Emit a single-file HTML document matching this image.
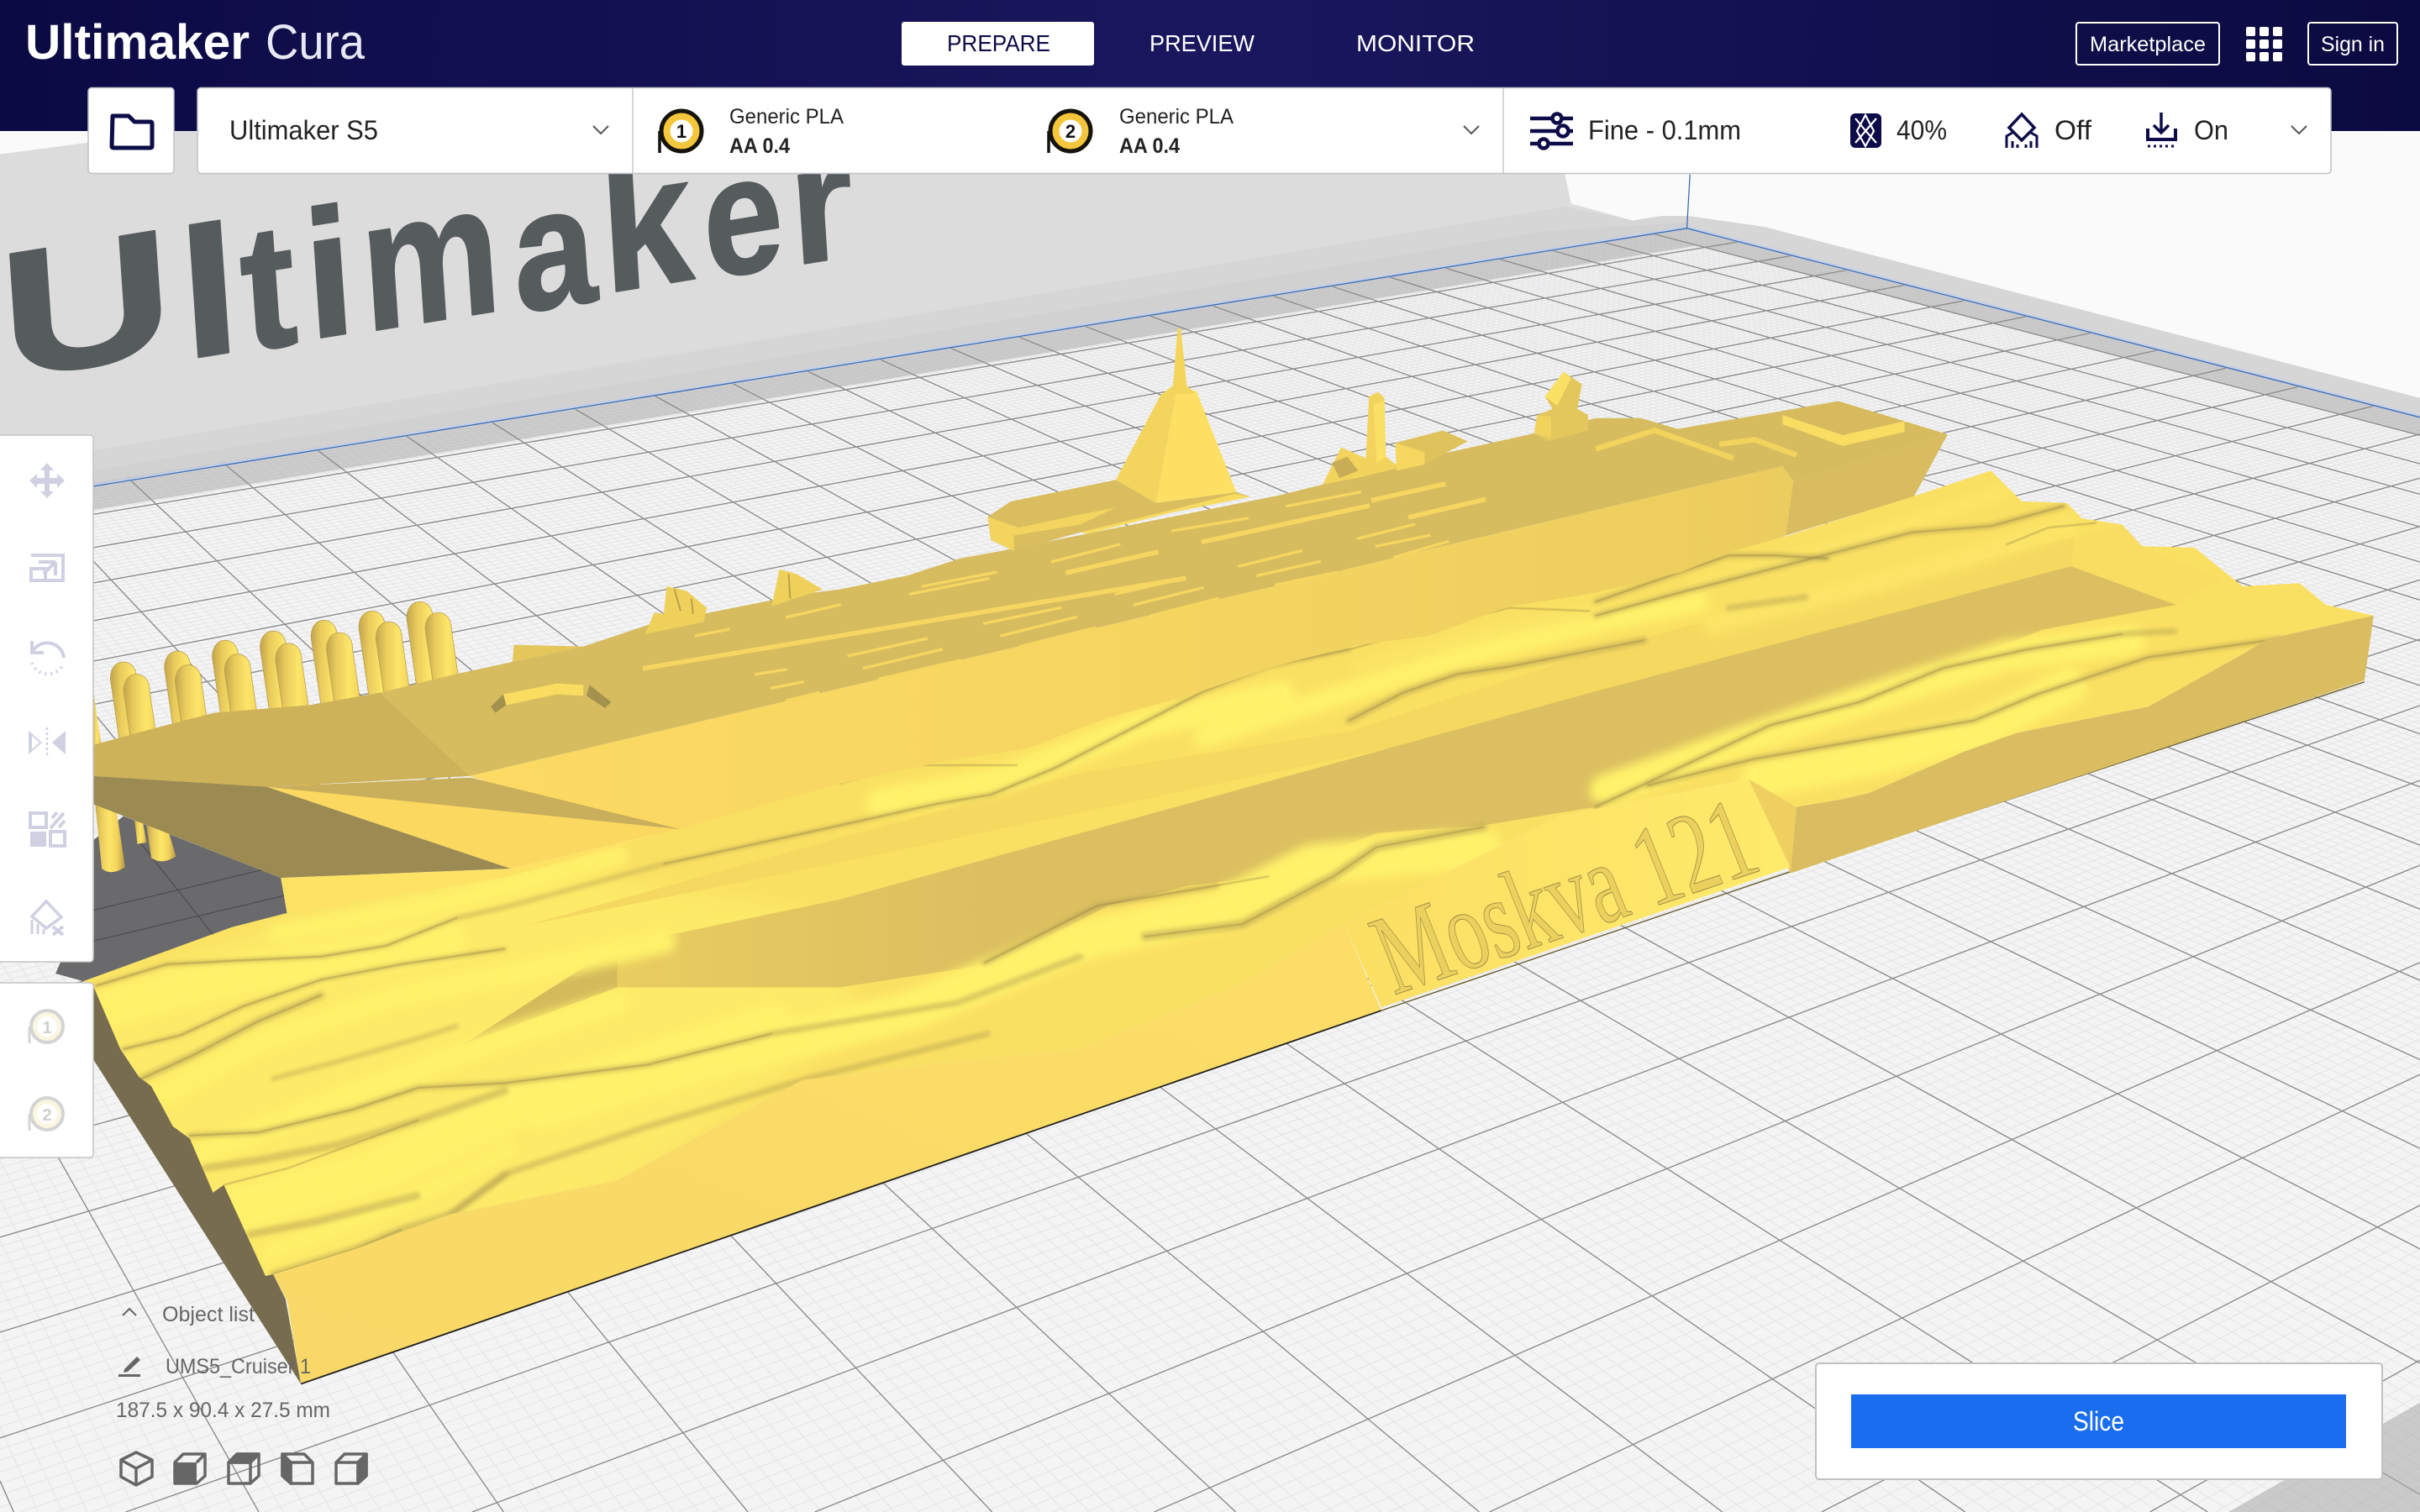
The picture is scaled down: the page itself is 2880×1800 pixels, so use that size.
<!DOCTYPE html>
<html lang="en"><head><meta charset="utf-8"><title>Ultimaker Cura</title>
<style>
html,body{margin:0;padding:0;width:2880px;height:1800px;overflow:hidden;background:#fafafa}
svg{display:block}
text{font-family:"Liberation Sans",Arial,sans-serif}
</style></head><body>
<svg xmlns="http://www.w3.org/2000/svg" width="2880" height="1800" viewBox="0 0 2880 1800">
<defs>
<linearGradient id="hdr" x1="0" x2="1" y1="0" y2="0"><stop offset="0" stop-color="#0c0a44"/><stop offset=".5" stop-color="#1a175e"/><stop offset="1" stop-color="#0b0a40"/></linearGradient>
<linearGradient id="pin" x1="0" x2="1" y1="0" y2="0"><stop offset="0" stop-color="#c2a44e"/><stop offset=".22" stop-color="#e9cb5c"/><stop offset=".5" stop-color="#fde669"/><stop offset=".75" stop-color="#f2d25b"/><stop offset="1" stop-color="#b5994a"/></linearGradient>
<linearGradient id="hull" x1="0" x2="1" y1="0" y2="0"><stop offset="0" stop-color="#fcda63"/><stop offset=".6" stop-color="#f4d460"/><stop offset="1" stop-color="#ebcc5e"/></linearGradient>
<linearGradient id="plq" x1="0" x2="1" y1="0" y2="0"><stop offset="0" stop-color="#fbdf64"/><stop offset="1" stop-color="#feea6b"/></linearGradient>
<linearGradient id="front" x1="0" x2="1" y1="1" y2="0"><stop offset="0" stop-color="#f9d867"/><stop offset="1" stop-color="#fcde67"/></linearGradient>
<linearGradient id="flat" gradientUnits="userSpaceOnUse" x1="400" y1="0" x2="640" y2="0"><stop offset="0" stop-color="#e9cc60"/><stop offset="1" stop-color="#dcbf60"/></linearGradient>
<filter id="b5" x="-10%" y="-50%" width="120%" height="200%"><feGaussianBlur stdDeviation="7"/></filter>
<filter id="b3" x="-10%" y="-50%" width="120%" height="200%"><feGaussianBlur stdDeviation="3"/></filter>
<filter id="b1" x="-10%" y="-50%" width="120%" height="200%"><feGaussianBlur stdDeviation="1.3"/></filter>
<filter id="b0" x="-10%" y="-50%" width="120%" height="200%"><feGaussianBlur stdDeviation=".4"/></filter>
<clipPath id="wclip"><path d="M54 636L150 601L185 592L330 568L430 540L544 508L614 493L666 485L718 465L770 451L822 433L874 419L926 412L978 393L1030 385L1089 371L1120 358L1159 347L1242 321L1290 305L1310 325L1339 326L1349 336L1375 340L1388 354L1422 355L1453 380L1490 378L1507 392L1538 399L1470 414L1453 424L1392 458L1307 475L1273 487L1211 514L1194 518L1164 523L1133 505L1010 529L871 599L800 640L700 680L600 690L520 700L400 765L292 787L229 810L177 826L172 827L145 768L138 773L123 738L112 730L98 704L90 698L78 680L60 638Z"/></clipPath>
<g id="p"><path d="M-8.500 11C-8.500 3-4 0 0 0C4 0 8.500 3 8.500 11L21 96L4 96Z" fill="url(#pin)" stroke="#b89c4a" stroke-width=".4"/></g>
</defs>

<g transform="scale(1.83673)">
<rect width="1568" height="980" fill="#fafafa"/>
<path d="M0 100L113 85L1014 85L1014 113L1018 132L1058 143L1076 140L1094 140L1143 147L1568 258L1568 275L1093 150L0 327Z" fill="#dcdcdc"/>
<path d="M0 302L1014 134L1058 143L1076 140L1094 140L1094 150L0 327Z" fill="#d6d6d6"/>
<path d="M0 315L1000 150L1094 144L1094 150L0 327Z" fill="#d1d1d1"/>
<path d="M1030 158L1062 151L1060 155L1035 161Z" fill="#ececec"/>
<path d="M1094 140L1143 147L1568 258L1568 275L1093 150Z" fill="#d6d6d6"/>
<path d="M0 325L1093 148L1568 270L1568 980L0 980Z" fill="#f4f4f5"/>
<g id="grid"></g>
<path d="M1568 909L1444 980L1568 980Z" fill="#a8a8a8" fill-opacity=".55"/>
<path d="M0 324.500L1093 147.500L1568 270" fill="none" stroke="#c3d0e6" stroke-width="2.200"/>
<path d="M0 325L1093 148L1568 270.500" fill="none" stroke="#3f6cb0" stroke-width=".7"/>
<path d="M1093 148L1095 113" fill="none" stroke="#3f6cb0" stroke-width=".7"/>
<g fill="#565b5d" stroke="#565b5d" stroke-width="1" stroke-linejoin="round" font-weight="700" font-size="100">
<text transform="matrix(1.55 -.25 .08 1.16 3 246)">U</text>
<text transform="matrix(1.4 -.22 .08 1.18 119 233)">l</text>
<text transform="matrix(1.05 -.17 .08 1.14 159 228)">t</text>
<text transform="matrix(1.15 -.18 .08 1.17 200 220)">i</text>
<text transform="matrix(1 -.16 .08 1.2 237 215)">m</text>
<text transform="matrix(.95 -.15 .08 1.1 335 203)">a</text>
<text transform="matrix(1.05 -.17 .07 1.18 392 190)">k</text>
<text transform="matrix(.92 -.15 .07 1.08 458 181)">e</text>
<text transform="matrix(1.05 -.17 .07 1.08 514 172)">r</text>
</g>
<path d="M60 545L80 529L182 569L186 592L54 636L36 631L39 624L60 610Z" fill="#6a6a6c"/>
<path d="M60 590L186 560M90 545L165 640M60 610L186 580" stroke="#4a4a4c" stroke-width=".6" fill="none"/>
<g>
<use href="#p" x="80" y="429"/><use href="#p" x="115" y="422"/><use href="#p" x="146" y="415"/><use href="#p" x="177" y="409"/><use href="#p" x="210" y="402"/><use href="#p" x="241" y="396"/><use href="#p" x="272" y="390"/>
<use href="#p" x="88.500" y="437"/><use href="#p" x="122" y="431"/><use href="#p" x="154" y="424"/><use href="#p" x="187" y="417"/><use href="#p" x="220" y="410"/><use href="#p" x="252" y="403"/><use href="#p" x="284" y="397"/>
<path d="M60 445L66 485L60 490Z" fill="url(#pin)"/>
<path d="M61 515L74 515L81 562Q72 568 66 563Z" fill="url(#pin)"/>
<path d="M87 530L92 530L95 546L89 547Z" fill="url(#pin)"/>
<path d="M95 535L108 535L114 555Q105 561 98 556Z" fill="url(#pin)"/>
</g>
<path d="M304 503L1155 302L1162 312L1157 347L1000 430L700 530L441 545Z" fill="url(#hull)"/>
<path d="M1162 312L1262 281.500L1240 322L1157 347Z" fill="#d8bc5f"/>
<path d="M60 483L104 471L139 462L201 457L246 449L295 437L378 419L420 405L520 385L544 382L588 373L622 362L649 357L829 321L857 314L907 303L926 296L989 282L1030 272L1034 271L1063 271L1087 278L1191 260L1262 281.500L1162 312L1155 302L304 503L60 503Z" fill="#d7bc5f"/>
<path d="M60 483L104 471L139 462L201 457L246 449L304 503L173 510L60 503Z" fill="#cdb25a"/>
<path d="M60 503L173 510L331 563L182 569L60 521Z" fill="#9b8a52"/>
<path d="M173 510L305 504L441 537L331 563Z" fill="#fbd860"/>
<path d="M173 510L305 504L441 537.500Z" fill="#c9ae5b"/>
<path d="M182 569L331 563L441 537L500 560L300 590L186 592Z" fill="#fde264"/>
<path d="M326 450L361 443L378 444L378 451L361 450L328 457Z" fill="#f9dc60"/>
<path d="M318 458L326 450L328 457L321 462ZM382 444L396 455L392 459L380 451Z" fill="#a3914e"/>
<path d="M333 418L378 419L332 429Z" fill="#e4c65a"/>
<path d="M432 380L445 383L458 394L456 403L418 411L424 397L430 398Z" fill="#eed05a"/>
<path d="M505 369L516 372L533 382L500 393Z" fill="#eed05a"/>
<path d="M437 382L441 396M448 388L449 398M511 372L512 388" stroke="#b79c4c" stroke-width="1"/>
<g stroke="#f6d660" fill="none" stroke-width="1.800" stroke-linecap="square">
<path d="M682 364L725 353M598 380L645 371M723 385L767 375M735 392L779 381M746 399L789 388M638 404L687 394M649 412L697 400M661 419L709 407M550 425L600 414M560 433L610 421M570 440L622 428M760 344L808 336M834 328L881 319M880 349L916 340M892 354L926 347M904 361L938 351M803 367L843 357M815 373L855 364M827 379L866 371M451 412L472 408M490 437L509 434M500 446L520 442M510 454L530 449M510 400L544 392M590 385L640 375"/>
<path d="M418 433L767 375M692 371L749 358M780 351L886 328M890 324L935 314M914 335L961 324" stroke-width="3"/>
<path d="M1034 291L1072 279L1123 297M1114 288L1137 285L1164 295" stroke="#f2d35e" stroke-width="3.500" stroke-linecap="butt"/>
</g>
<path d="M640 335L655 325L723 311L749 326L801 319L810 322L760 332L700 345L657 357L642 350Z" fill="#dabd5e"/>
<path d="M640 335L660 342L702 333L723 329L700 340L657 347L657 357L642 350Z" fill="#f3d45e"/>
<path d="M700 345L749 333L800 320L810 322L760 332L705 346Z" fill="#f7da60"/>
<path d="M752 256L762 255L749 326L723 311Z" fill="#f3d45c"/>
<path d="M762 255L775 253L801 319L749 326Z" fill="#fcdf63"/>
<path d="M763 213L765 213L769 250L775 255L752 256L760 250Z" fill="#f4d55c"/>
<path d="M857 314L869 290L885 297L887 257L893 254L897 258L898 296L907 303L883 309Z" fill="#f2d35c"/>
<path d="M890 262L897 260L898 296L892 300Z" fill="#fbe066"/>
<path d="M863 300L873 296L880 305L868 310Z" fill="#c8ad56"/>
<path d="M904 287L935 279L951 286L923 301L905 305Z" fill="#dfc25c"/>
<path d="M904 287L923 293L923 301L905 305Z" fill="#f5d760"/>
<path d="M994 281L996 269L1006 265L1001 257L1013 241L1025 249L1022 265L1029 269L1029 279L1003 286Z" fill="#e3c65c"/>
<path d="M1001 257L1013 241L1018 245L1009 263Z" fill="#fbe066"/>
<path d="M996 269L1005 270L1005 284L994 281Z" fill="#f0d25c"/>
<path d="M1155 269L1191 260L1234 273L1194 282Z" fill="#d6ba5d"/>
<path d="M1155 269L1194 282L1234 273L1234 280L1194 289L1155 275Z" fill="#f9dc62"/>

<path d="M54 636L150 601L185 592L330 568L430 540L544 508L614 493L666 485L718 465L770 451L822 433L874 419L926 412L978 393L1030 385L1089 371L1120 358L1159 347L1242 321L1290 305L1310 325L1339 326L1349 336L1375 340L1388 354L1422 355L1453 380L1490 378L1507 392L1538 399L1470 414L1453 424L1392 458L1307 475L1273 487L1211 514L1194 518L1164 523L1133 505L1010 529L871 599L800 640L700 680L600 690L520 700L400 765L292 787L229 810L177 826L172 827L145 768L138 773L123 738L112 730L98 704L90 698L78 680L60 638Z" fill="#fae062"/>

<g clip-path="url(#wclip)">
<path d="M40 640L330 560L520 590L560 660L400 770L170 835Z" fill="#fdea68" filter="url(#b5)"/>
<path d="M340 600L544 559L1089 446L1342 367L1344 348L1238 374L1089 407L1013 429L874 474L700 501L544 543Z" fill="#f5d860"/>
<path d="M1344 348L1342 367L1410 392L1440 375L1388 354L1375 340Z" fill="#f9dd62"/>
<path d="M544 583L1034 448L1342 367L1410 392L1324 408L1238 441L1136 475L1034 523L961 535L892 540L822 568L770 574L718 587L648 624L544 640L400 640L300 677L400 613Z" fill="url(#flat)"/>
<path d="M400 613L400 640L300 677Z" fill="#d5ba5c"/>
<g fill="none" stroke="#fff16b" filter="url(#b3)" stroke-linecap="round">
<path d="M66 655L120 640L200 625L290 610" stroke-width="26"/>
<path d="M180 605L290 585L400 555" stroke-width="13"/>
<path d="M100 712L170 675L260 645L340 630L430 610" stroke-width="16"/>
<path d="M130 748L220 712L330 672L400 650" stroke-width="16"/>
<path d="M150 785L240 760L340 715L500 665" stroke-width="30"/>
<path d="M175 812L260 780L330 745" stroke-width="10"/>
<path d="M350 720L450 690L590 655L700 610L790 590L850 560L960 550" stroke-width="26"/>
<path d="M570 520L650 505L740 470L830 450" stroke-width="18"/>
<path d="M780 478L870 450L950 425L1030 405L1100 390" stroke-width="14"/>
<path d="M880 432L960 410L1040 395" stroke-width="8" stroke="#fbe466"/>
<path d="M1040 512L1130 480L1220 450L1300 425L1380 415" stroke-width="20"/>
<path d="M1140 505L1220 490L1280 475L1340 445" stroke-width="24"/>
<path d="M1100 378L1180 358L1250 335L1300 318" stroke-width="10" stroke="#fbe466"/>
<path d="M1110 405L1190 385L1280 360L1340 340" stroke-width="14" stroke="#fbe466"/>
</g>
<g fill="none" stroke="#b9a353" filter="url(#b1)" stroke-linecap="round" stroke-opacity=".5" stroke-linejoin="round">
<path d="M62 639L108 625L146 623L208 620L250 613L296 595L327 588L430 560L544 535L607 521L642 515L683 498L753 462L780 448L822 432L874 421" stroke-width="3"/>
<path d="M80 680L117 671L158 652L208 635L260 625L327 615" stroke-width="3"/>
<path d="M92 699L125 684L167 662L208 645" stroke-width="5"/>
<path d="M177 699L219 688L271 673L296 665" stroke-width="3"/>
<path d="M123 736L167 734L229 719L271 705L327 702L420 690L500 670L620 650L700 620" stroke-width="4"/>
<path d="M133 757L167 752L219 742L271 726L327 707" stroke-width="5"/>
<path d="M162 800L208 791L270 775" stroke-width="5"/>
<path d="M177 826L229 810L260 797L292 787L327 761" stroke-width="5"/>
<path d="M292 787L330 760L420 730L520 700L640 670" stroke-width="4"/>
<path d="M742 607L805 599L864 568L892 549L961 536" stroke-width="6"/>
<path d="M638 624L711 587L788 574" stroke-width="4"/>
<path d="M874 467L909 449L944 437L978 432L1065 415" stroke-width="5"/>
<path d="M1034 390L1068 378L1120 360L1150 360L1184 362" stroke-width="4"/>
<path d="M1034 399L1085 385L1170 363L1239 345L1290 341L1337 328" stroke-width="4"/>
<path d="M1034 523L1085 499L1147 470L1205 455L1259 433L1313 421L1375 411L1409 409" stroke-width="4"/>
<path d="M1068 509L1136 492L1205 480L1279 467L1320 450L1392 426L1477 414" stroke-width="4"/>
<path d="M1120 394L1170 387" stroke-width="4"/>
</g>
<g fill="none" stroke="#8a7841" filter="url(#b0)" stroke-linecap="round" stroke-linejoin="round" stroke-opacity=".55" stroke-width=".8">
<path d="M62 639L108 625L146 623L208 620L250 613L296 595"/>
<path d="M80 680L117 671L158 652L208 635L260 625L327 615"/>
<path d="M92 699L125 684L167 662L208 645"/>
<path d="M123 736L167 734L229 719L271 705L327 702L420 690L500 670"/>
<path d="M145 768L187 757L271 726"/>
<path d="M177 826L229 810L260 797"/>
<path d="M544 508L590 496L659 496"/>
<path d="M544 535L607 521L642 515L683 498L753 462L780 448L822 432L874 421L926 407L978 394L1030 396"/>
<path d="M874 467L909 449L944 437L978 432L1065 415"/>
<path d="M1034 399L1085 385L1170 363L1239 345L1290 341L1337 328"/>
<path d="M1034 390L1068 378L1120 360L1150 360L1184 362"/>
<path d="M1034 523L1085 499L1147 470L1205 455L1259 433L1313 421L1375 411"/>
<path d="M1068 509L1136 492L1205 480L1279 467L1320 450L1392 426L1477 414"/>
<path d="M638 624L711 587L788 574L822 568"/>
<path d="M742 607L805 599L864 568L892 549L961 536"/>
<path d="M430 560L544 535"/>
<path d="M1300 353L1327 342L1358 339"/>
</g>
</g>

<path d="M177 826L229 810L292 787L400 765L520 700L600 690L700 680L800 640L871 599L895 655L195 897L186 843Z" fill="url(#front)"/>
<path d="M195 897L895 655" stroke="#222" stroke-width="1" fill="none"/>
<path d="M895 655L1160 565L1532 442" stroke="#6d6238" stroke-width=".8" fill="none"/>
<path d="M1164 523L1194 518L1211 514L1273 487L1307 475L1392 458L1453 424L1470 414L1538 399L1532 441L1160 566Z" fill="#d9bd60"/>
<path d="M1133 505L1164 523L1160 566Z" fill="#eecf60"/>
<path d="M871 599L1010 529L1133 505L1160 562L895 653Z" fill="url(#plq)"/>
<text transform="matrix(1 -.34 .56 1.4 903 645)" font-size="50" textLength="240" lengthAdjust="spacingAndGlyphs" fill="#ecd05e" stroke="#9c8947" stroke-width=".35" style="font-family:'Liberation Serif',serif">Moskva 121</text>
<path d="M60 638L78 680L90 698L98 704L112 730L123 738L138 773L145 768L172 827L177 826L185 842L195 897L60 686Z" fill="#776c4f"/>
</g>

<rect width="2880" height="156" fill="url(#hdr)"/>
<text x="30" y="70" font-size="58" font-weight="700" fill="#fff" textLength="267" lengthAdjust="spacingAndGlyphs">Ultimaker</text>
<text x="316" y="70" font-size="58" fill="#e8e8f4" textLength="118" lengthAdjust="spacingAndGlyphs">Cura</text>
<rect x="1073" y="26" width="229" height="52" rx="3" fill="#fff"/>
<text x="1127" y="61" font-size="28" fill="#0d0c45" textLength="123" lengthAdjust="spacingAndGlyphs">PREPARE</text>
<text x="1368" y="61" font-size="28" fill="#fff" textLength="125" lengthAdjust="spacingAndGlyphs">PREVIEW</text>
<text x="1614" y="61" font-size="28" fill="#fff" textLength="141" lengthAdjust="spacingAndGlyphs">MONITOR</text>
<rect x="2471" y="27" width="170" height="50" rx="3" fill="none" stroke="#fff" stroke-width="2"/>
<text x="2487" y="61" font-size="25" fill="#fff" textLength="138" lengthAdjust="spacingAndGlyphs">Marketplace</text>
<rect x="2747" y="27" width="106" height="50" rx="3" fill="none" stroke="#fff" stroke-width="2"/>
<text x="2762" y="61" font-size="25" fill="#fff" textLength="76" lengthAdjust="spacingAndGlyphs">Sign in</text>
<g fill="#fff">
<rect x="2673" y="32" width="11" height="11" rx="2"/><rect x="2689" y="32" width="11" height="11" rx="2"/><rect x="2705" y="32" width="11" height="11" rx="2"/>
<rect x="2673" y="47" width="11" height="11" rx="2"/><rect x="2689" y="47" width="11" height="11" rx="2"/><rect x="2705" y="47" width="11" height="11" rx="2"/>
<rect x="2673" y="62" width="11" height="11" rx="2"/><rect x="2689" y="62" width="11" height="11" rx="2"/><rect x="2705" y="62" width="11" height="11" rx="2"/>
</g>

<g fill="#fff" stroke="#c0c0c8" stroke-width="1.500">
<rect x="105" y="104.500" width="102" height="102" rx="4"/>
<rect x="235" y="104.500" width="2539" height="102" rx="4"/>
</g>
<path d="M134 138h19l7 7h19q2 0 2 2v27q0 2-2 2h-44q-2 0-2-2z" fill="none" stroke="#0e0c48" stroke-width="5" stroke-linejoin="round"/>
<path d="M753 105v101M1789 105v101" stroke="#c8c8c8" stroke-width="1.500"/>
<text x="273" y="166" font-size="32" fill="#232323" textLength="177" lengthAdjust="spacingAndGlyphs">Ultimaker S5</text>
<g fill="none" stroke="#555" stroke-width="2"><path d="M706 150l9 9 9-9M1742 150l9 9 9-9M2727 150l9 9 9-9"/></g>

<g transform="translate(811,156)">
<path d="M-26 26V0" stroke="#111" stroke-width="3.500" fill="none"/>
<circle r="24" fill="#f3c63c" stroke="#15130c" stroke-width="5"/><circle r="13.500" fill="#fff"/>
<text y="8" text-anchor="middle" font-size="22" font-weight="700" fill="#111">1</text></g>
<g transform="translate(1274,156)">
<path d="M-26 26V0" stroke="#111" stroke-width="3.500" fill="none"/>
<circle r="24" fill="#f3c63c" stroke="#15130c" stroke-width="5"/><circle r="13.500" fill="#fff"/>
<text y="8" text-anchor="middle" font-size="22" font-weight="700" fill="#111">2</text></g>
<text x="868" y="147" font-size="25" fill="#222" textLength="136" lengthAdjust="spacingAndGlyphs">Generic PLA</text>
<text x="868" y="182" font-size="25" font-weight="700" fill="#222" textLength="72" lengthAdjust="spacingAndGlyphs">AA 0.4</text>
<text x="1332" y="147" font-size="25" fill="#222" textLength="136" lengthAdjust="spacingAndGlyphs">Generic PLA</text>
<text x="1332" y="182" font-size="25" font-weight="700" fill="#222" textLength="72" lengthAdjust="spacingAndGlyphs">AA 0.4</text>

<g stroke="#0e0c48" stroke-width="4.500" fill="#fff">
<path d="M1821 141H1872M1821 156H1872M1821 171H1872" fill="none"/>
<circle cx="1853" cy="141" r="5.500"/><circle cx="1860" cy="156" r="6.500"/><circle cx="1837" cy="171" r="5.500"/>
</g>
<text x="1890" y="166" font-size="32" fill="#232323" textLength="182" lengthAdjust="spacingAndGlyphs">Fine - 0.1mm</text>
<rect x="2202" y="135" width="37" height="41" rx="6" fill="#0e0c48"/>
<path d="M2208 141Q2220 156 2233 170M2233 141Q2220 156 2208 170M2220 137L2230 156L2220 174L2210 156Z" stroke="#fff" stroke-width="2.200" fill="none"/>
<text x="2257" y="166" font-size="32" fill="#232323" textLength="60" lengthAdjust="spacingAndGlyphs">40%</text>
<path d="M2406 136L2421 152L2406 167L2391 152Z" fill="none" stroke="#0e0c48" stroke-width="3.500"/>
<path d="M2388 176V162L2395 158M2424 176V162L2417 158M2395 176V168M2401 176V172M2411 176V172M2417 176V168" stroke="#0e0c48" stroke-width="3" fill="none"/>
<text x="2445" y="166" font-size="32" fill="#232323" textLength="44" lengthAdjust="spacingAndGlyphs">Off</text>
<path d="M2572 134V157M2563 149L2572 158L2581 149" stroke="#0e0c48" stroke-width="3.500" fill="none"/>
<path d="M2556 153V166H2589V153" stroke="#0e0c48" stroke-width="4" fill="none"/>
<path d="M2556 174H2590" stroke="#0e0c48" stroke-width="3" stroke-dasharray="3 4" fill="none"/>
<text x="2611" y="166" font-size="32" fill="#232323" textLength="41" lengthAdjust="spacingAndGlyphs">On</text>

<rect x="-6" y="518" width="117" height="627" rx="4" fill="#fff" stroke="#c4c4c4" stroke-width="1.500"/>
<rect x="-6" y="1170" width="117" height="208" rx="4" fill="#fff" stroke="#c4c4c4" stroke-width="1.500"/>
<g fill="#cfd1e2" stroke="none">
<path d="M56 551L64 560H59V569H68V564L77 572L68 581V576H59V585H64L56 593L48 585H53V576H44V581L35 572L44 564V569H53V560H48Z"/>
<path d="M37 661H75V691H37V677H54V691M46 669H66M66 669V685M66 669L52 683" fill="none" stroke="#cfd1e2" stroke-width="4"/>
<path d="M38 763L38 777L52 777M38 777A20 20 0 0 1 76 783" fill="none" stroke="#cfd1e2" stroke-width="4"/>
<path d="M38 789A20 20 0 0 0 75 791" fill="none" stroke="#cfd1e2" stroke-width="4" stroke-dasharray="2 5"/>
<path d="M34 870V898L50 884ZM78 870V898L62 884Z"/><path d="M38 876V892L47 884Z" fill="#fff"/>
<path d="M56 866V902" stroke="#cfd1e2" stroke-width="2.500" stroke-dasharray="3 3" fill="none"/>
<rect x="36" y="968" width="19" height="17" fill="none" stroke="#cfd1e2" stroke-width="4"/>
<rect x="36" y="990" width="19" height="18"/>
<rect x="60" y="990" width="17" height="17" fill="none" stroke="#cfd1e2" stroke-width="4"/>
<path d="M60 986L76 968M62 974L68 967M70 985L77 977" stroke="#cfd1e2" stroke-width="4" fill="none"/>
<path d="M55 1073L73 1092L55 1105L38 1091Z" fill="none" stroke="#cfd1e2" stroke-width="3.500"/>
<path d="M38 1112V1095M45 1112V1100M52 1112V1106" stroke="#cfd1e2" stroke-width="3" fill="none"/>
<path d="M63 1103L75 1113M75 1103L63 1113" stroke="#cfd1e2" stroke-width="4" fill="none"/>
</g>
<g transform="translate(56,1222)" fill="none">
<path d="M-21 20V0" stroke="#d4d4d4" stroke-width="3"/>
<circle r="19" stroke="#d4d4d4" stroke-width="4" fill="#fbf6df"/><circle r="12" fill="#fff"/>
<text y="8" text-anchor="middle" font-size="20" font-weight="700" fill="#cfcfcf">1</text></g>
<g transform="translate(56,1326)" fill="none">
<path d="M-21 20V0" stroke="#d4d4d4" stroke-width="3"/>
<circle r="19" stroke="#d4d4d4" stroke-width="4" fill="#fbf6df"/><circle r="12" fill="#fff"/>
<text y="8" text-anchor="middle" font-size="20" font-weight="700" fill="#cfcfcf">2</text></g>

<path d="M146 1566L154 1558L162 1566" fill="none" stroke="#666" stroke-width="2"/>
<text x="193" y="1573" font-size="25" fill="#666" textLength="110" lengthAdjust="spacingAndGlyphs">Object list</text>
<path d="M141 1637.500H167" stroke="#666" stroke-width="3"/>
<path d="M148 1630L163 1615L167 1619L152 1633L147 1634Z" fill="#666"/>
<text x="197" y="1635" font-size="25" fill="#666" textLength="173" lengthAdjust="spacingAndGlyphs">UMS5_Cruiser 1</text>
<text x="138" y="1687" font-size="25" fill="#666" textLength="255" lengthAdjust="spacingAndGlyphs">187.5 x 90.4 x 27.5 mm</text>
<g fill="none" stroke="#666" stroke-width="3.500" stroke-linejoin="round">
<path d="M162 1729L181 1738V1758L162 1768L144 1758V1738ZM144 1738L162 1748L181 1738M162 1748V1768"/>
<path d="M208 1741L218 1731H244V1757L234 1766H208Z"/><rect x="208" y="1741" width="26" height="25" fill="#666" stroke="none"/><path d="M234 1741L244 1731"/>
<path d="M272 1741L282 1731H308V1757L298 1766H272ZM272 1741H298V1766M298 1741L308 1731"/><path d="M272 1741L282 1731H308L298 1741Z" fill="#666"/>
<path d="M336 1731H362L372 1741V1766H346L336 1757ZM346 1741H372M346 1741V1766M336 1731L346 1741"/><path d="M336 1731L346 1741V1766L336 1757Z" fill="#666"/>
<path d="M400 1741L410 1731H436V1757L426 1766H400ZM400 1741H426V1766M426 1741L436 1731"/><path d="M426 1741L436 1731V1757L426 1766Z" fill="#666"/>
</g>

<rect x="2161" y="1623" width="674" height="138" rx="4" fill="#fff" stroke="#c0c0c0" stroke-width="2"/>
<rect x="2203" y="1660" width="589" height="64" fill="#1a6dee"/>
<text x="2467" y="1703" font-size="32" fill="#fff" textLength="61" lengthAdjust="spacingAndGlyphs">Slice</text>
</svg>
<script>
(function(){
var g=document.getElementById('grid'),ns='http://www.w3.org/2000/svg';
function P(t,s){var d=1-t-s;return[(1093-3580*t+540*s)/d,(148+250*t+272*s)/d];}
function add(name,attrs){var e=document.createElementNS(ns,name);for(var k in attrs)e.setAttribute(k,attrs[k]);g.appendChild(e);return e;}
function clip(a,b){var x0=a[0],y0=a[1],dx=b[0]-x0,dy=b[1]-y0,t0=0,t1=1,p=[-dx,dx,-dy,dy],q=[x0,1568-x0,y0-85,980-y0];
 for(var i=0;i<4;i++){if(p[i]===0){if(q[i]<0)return null;continue;}var r=q[i]/p[i];if(p[i]<0){if(r>t1)return null;if(r>t0)t0=r;}else{if(r<t0)return null;if(r<t1)t1=r;}}
 return[[x0+t0*dx,y0+t0*dy],[x0+t1*dx,y0+t1*dy]];}
function band(t0,t1,s0,s1,fill){var a=P(t0,s0),b=P(t1,s0),c=P(t1,s1),d=P(t0,s1);
 add('path',{d:'M'+[a,b,c,d].map(function(p){return p[0].toFixed(1)+' '+p[1].toFixed(1)}).join('L')+'Z',fill:fill});}
function lines(list,col,w){var d='';list.forEach(function(l){var c=clip(l[0],l[1]);if(!c)return;d+='M'+c[0][0].toFixed(1)+' '+c[0][1].toFixed(1)+'L'+c[1][0].toFixed(1)+' '+c[1][1].toFixed(1);});add('path',{d:d,stroke:col,'stroke-width':w,fill:'none'});}
var dt=.01273,LIM=.93;
function sj(j){return .0202+.0202*j-.000076*j*j;}
function tl(t){return[P(t,0),P(t,LIM-t)];}
function sl(s){return[P(0,s),P(LIM-s,s)];}
var a=[],b=[],i,t,s;
for(i=0;(t=(i/10+.09)*dt)<.6;i++)a.push(tl(t));
for(i=-9;i<450;i++){s=sj(i/10);if(s<.8)a.push(sl(s));}
lines(a,'#e6e6e8',.6);
band(0,.32,0,.0175,'rgba(165,165,165,.5)');
band(0,.0088,.0175,.24,'rgba(165,165,165,.5)');
for(i=0;(t=(i+.69)*dt)<.6;i++)b.push(tl(t));
for(i=0;i<45;i++){s=sj(i);if(s<.8)b.push(sl(s));}
lines(b,'#8c8c8c',.75);
})();
</script>
</body></html>
